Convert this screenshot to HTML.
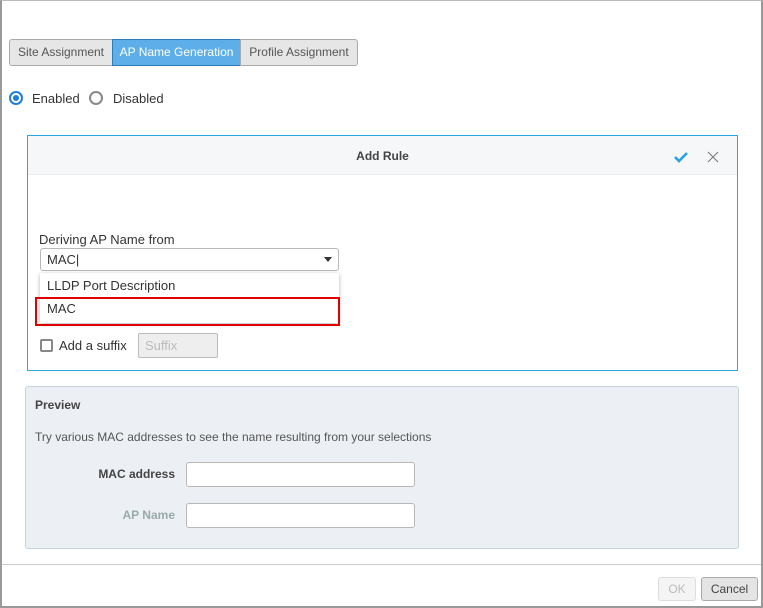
<!DOCTYPE html>
<html><head><style>
*{box-sizing:border-box;margin:0;padding:0}
body{width:763px;height:608px;background:#fff;font-family:"Liberation Sans",sans-serif;font-size:12px;color:#333;position:relative;overflow:hidden}
.a{position:absolute}
.frame{left:0;top:0;width:763px;height:608px;border:2px solid #999;border-top:1px solid #bbb}
.tab{top:39px;height:27px;border:1px solid #aaa;background:#e6e6e6;color:#555;line-height:25px;text-align:center;font-size:12px}
.inp{border:1px solid #b8b8b8;border-radius:3px;background:#fff}
</style></head><body>
<div class="a frame"></div>
<div class="a tab" style="left:9px;width:104px;border-radius:3px 0 0 3px">Site Assignment</div>
<div class="a tab" style="left:112px;width:129px;background:#5eafe9;border-color:#2c7cb9;color:#fff">AP Name Generation</div>
<div class="a tab" style="left:240px;width:118px;border-radius:0 3px 3px 0">Profile Assignment</div>
<div class="a" style="left:9px;top:91px;width:14px;height:14px;border:2px solid #1e7fd6;border-radius:50%"><div style="margin:2px;width:6px;height:6px;border-radius:50%;background:#1e7fd6"></div></div>
<div class="a" style="left:32px;top:91px;font-size:13px">Enabled</div>
<div class="a" style="left:89px;top:91px;width:14px;height:14px;border:2px solid #888;border-radius:50%"></div>
<div class="a" style="left:113px;top:91px;font-size:13px">Disabled</div>

<div class="a" style="left:27px;top:135px;width:711px;height:236px;border:1px solid #29a8e0">
 <div style="height:39px;background:#f5f7f9;border-bottom:1px solid #eceff2;text-align:center;line-height:40px;font-weight:bold;color:#444">Add Rule</div>
</div>
<svg class="a" style="left:673px;top:150px" width="16" height="14"><path d="M2 7l4 4 8-8" stroke="#29a0e6" stroke-width="2.6" fill="none"/></svg>
<svg class="a" style="left:707px;top:151px" width="12" height="12"><path d="M1 1l10 10M11 1L1 11" stroke="#777" stroke-width="1"/></svg>

<div class="a" style="left:39px;top:232px;font-size:13px">Deriving AP Name from</div>
<div class="a inp" style="left:40px;top:248px;width:299px;height:23px;font-size:13px;line-height:21px;padding-left:6px">MAC|</div>
<div class="a" style="left:324px;top:257px;width:0;height:0;border-left:4px solid transparent;border-right:4px solid transparent;border-top:5px solid #333"></div>
<div class="a" style="left:40px;top:273px;width:299px;height:50px;background:#fff;box-shadow:0 1px 4px rgba(0,0,0,.3);border-radius:2px"></div>
<div class="a" style="left:47px;top:278px;font-size:13px">LLDP Port Description</div>
<div class="a" style="left:35px;top:297px;width:305px;height:29px;border:2px solid #e00000"></div>
<div class="a" style="left:47px;top:301px;font-size:13px">MAC</div>
<div class="a" style="left:40px;top:339px;width:13px;height:13px;border:2px solid #888;border-radius:2px"></div>
<div class="a" style="left:59px;top:338px;font-size:13px">Add a suffix</div>
<div class="a" style="left:138px;top:333px;width:80px;height:25px;border:1px solid #bbb;border-radius:2px;background:#eee;color:#bbb;font-size:13px;line-height:23px;padding-left:6px">Suffix</div>

<div class="a" style="left:25px;top:386px;width:714px;height:163px;background:#ecf0f4;border:1px solid #c9d2da;border-radius:3px"></div>
<div class="a" style="left:35px;top:398px;font-weight:bold;color:#444">Preview</div>
<div class="a" style="left:35px;top:430px;color:#555">Try various MAC addresses to see the name resulting from your selections</div>
<div class="a" style="left:40px;top:467px;width:135px;text-align:right;font-weight:bold;color:#444">MAC address</div>
<div class="a inp" style="left:186px;top:462px;width:229px;height:25px"></div>
<div class="a" style="left:40px;top:508px;width:135px;text-align:right;font-weight:bold;color:#9aa">AP Name</div>
<div class="a inp" style="left:186px;top:503px;width:229px;height:25px"></div>

<div class="a" style="left:2px;top:564px;width:759px;height:1px;background:#ccc"></div>
<div class="a" style="left:658px;top:577px;width:38px;height:24px;border:1px solid #ddd;border-radius:3px;background:#f4f4f4;color:#bbb;text-align:center;line-height:22px">OK</div>
<div class="a" style="left:701px;top:577px;width:57px;height:24px;border:1px solid #aaa;border-radius:3px;background:#e4e4e4;color:#444;text-align:center;line-height:22px">Cancel</div>
</body></html>
